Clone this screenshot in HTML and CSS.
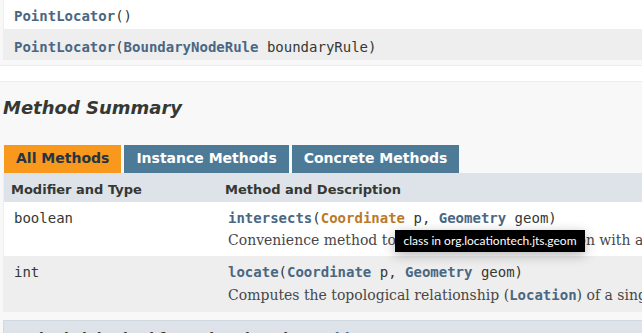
FILE: index.html
```html
<!DOCTYPE html>
<html lang="en">

<head>
    <meta charset="UTF-8">
    <title>PointLocator</title>
    <link rel="stylesheet" href="styles.css">
</head>

<body>
    <div class="page">
        <!-- 생성자 요약 -->
        <div class="section ctor-section">
            <table class="summary">
                <tr class="alt-color">
                    <td class="col-one"><code><a href="#">PointLocator</a>()</code></td>
                </tr>
                <tr class="row-color">
                    <td class="col-one"><code><a href="#">PointLocator</a>(<a href="#">BoundaryNodeRule</a>&nbsp;boundaryRule)</code></td>
                </tr>
            </table>
        </div>

        <!-- 메서드 요약 -->
        <div class="section method-section">
            <h3 class="summary-title">Method Summary</h3>
            <div class="tabs">
                <span class="tab active">All Methods</span>
                <span class="tab">Instance Methods</span>
                <span class="tab">Concrete Methods</span>
            </div>
            <table class="summary member">
                <colgroup>
                    <col class="first-col">
                    <col>
                </colgroup>
                <tr>
                    <th class="col-first">Modifier and Type</th>
                    <th class="col-last">Method and Description</th>
                </tr>
                <tr class="alt-color">
                    <td class="col-first"><code>boolean</code></td>
                    <td class="col-last">
                        <code><a href="#">intersects</a>(<a href="#" class="hover">Coordinate</a>&nbsp;p, <a href="#">Geometry</a>&nbsp;geom)</code>
                        <div class="block">Convenience method to test a point for intersection with a Geometry</div>
                    </td>
                </tr>
                <tr class="row-color">
                    <td class="col-first"><code>int</code></td>
                    <td class="col-last">
                        <code><a href="#">locate</a>(<a href="#">Coordinate</a>&nbsp;p, <a href="#">Geometry</a>&nbsp;geom)</code>
                        <div class="block">Computes the topological relationship (<code><a href="#">Location</a></code>) of a single point to a Geometry.</div>
                    </td>
                </tr>
            </table>
            <div class="inherited">
                <h3>Methods inherited from class&nbsp;java.lang.<a href="#">Object</a></h3>
            </div>
        </div>

        <div class="tooltip">class in org.locationtech.jts.geom</div>
    </div>
</body>

</html>
```

FILE: styles.css
```css
/* 페이지 기본 */
body {
    margin: 0;
    font-family: 'DejaVu Sans', Arial, Helvetica, sans-serif;
    font-size: 14px;
    color: #353833;
    background: #fff;
    overflow: hidden;
}

.page {
    position: relative;
    width: 960px;
    margin-top: -2px;
}

code {
    font-family: 'DejaVu Sans Mono', monospace;
    font-size: 14px;
    line-height: 20px;
}

a {
    color: #4a6782;
    text-decoration: none;
    font-weight: bold;
}

a.hover {
    color: #bb7a2a;
}

/* 섹션 */
.section {
    background: #f8f8f8;
    padding-left: 3px;
}

.ctor-section {
    padding-bottom: 5px;
    border-bottom: 1px solid #ededed;
    margin-bottom: 15px;
}

.method-section {
    border-top: 1px solid #ededed;
}

.summary-title {
    margin: 0;
    padding: 13px 0 15px;
    font-size: 18px;
    line-height: 25px;
    font-style: italic;
    color: #353833;
}

/* 탭 */
.tabs {
    display: flex;
    gap: 3px;
    padding: 10px 0 0 1px;
}

.tab {
    padding: 5px 12px 7px;
    height: 16px;
    line-height: 16px;
    font-weight: bold;
    white-space: nowrap;
    background: #4d7a97;
    color: #fff;
}

.tab.active {
    background: #f8981d;
    color: #253441;
}

/* 표 */
.summary {
    width: 100%;
    border-spacing: 0;
    border-left: 1px solid #eee;
    table-layout: fixed;
}

.first-col {
    width: 214px;
}

.summary th {
    background: #dee3e9;
    text-align: left;
    font-size: 13px;
    line-height: 18px;
    padding: 8px 3px 3px 7px;
    white-space: nowrap;
}

.summary td {
    vertical-align: top;
    padding: 8px 3px 3px 10px;
    white-space: nowrap;
}

.member td {
    padding-top: 6px;
}

.alt-color {
    background: #fff;
}

.row-color {
    background: #eeeeef;
}

.block {
    font-family: 'DejaVu Serif', Georgia, 'Times New Roman', serif;
    font-size: 14px;
    line-height: 18px;
    color: #474747;
    margin: 3px 10px 4px 0;
}

/* 상속 메서드 */
.inherited {
    padding-top: 8px;
}

.inherited h3 {
    margin: 0;
    background: #dee3e9;
    border: 1px solid #d0d9e0;
    padding: 7px 5px;
    font-size: 14px;
    line-height: 20px;
}

/* 툴팁 */
.tooltip {
    position: absolute;
    left: 395px;
    top: 232px;
    width: 190px;
    height: 22px;
    background: #000;
    color: #fff;
    font-family: Lato, 'Open Sans', sans-serif;
    font-size: 12px;
    line-height: 22px;
    text-align: center;
    box-shadow: 0 3px 12px rgba(0, 0, 0, 0.3);
}
```
